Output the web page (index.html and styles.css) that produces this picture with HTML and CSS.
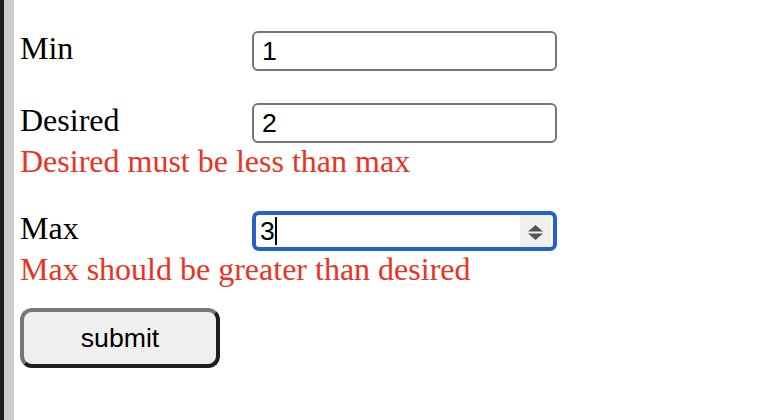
FILE: index.html
```html
<!DOCTYPE html>
<html lang="en">
<head>
<meta charset="utf-8">
<title>Scaling form</title>
<link rel="stylesheet" href="styles.css">
</head>
<body>
<div class="rail-dark"></div>
<div class="rail-grey"></div>
<main class="content">
  <form class="form">
    <div class="group">
      <div class="row">
        <label class="label" for="min">Min</label>
        <input class="input" id="min" type="text" value="1">
      </div>
    </div>
    <div class="group">
      <div class="row">
        <label class="label" for="desired">Desired</label>
        <input class="input" id="desired" type="text" value="2">
      </div>
      <div class="error">Desired must be less than max</div>
    </div>
    <div class="group">
      <div class="row">
        <label class="label">Max</label>
        <div class="input input-focused">
          <span class="value">3</span><span class="caret"></span>
          <span class="spinner">
            <svg width="31" height="33" viewBox="0 0 31 33">
              <polygon points="15.5,10 8,16.5 23,16.5" fill="#555"/>
              <polygon points="8,18.5 23,18.5 15.5,25" fill="#555"/>
            </svg>
          </span>
        </div>
      </div>
      <div class="error">Max should be greater than desired</div>
    </div>
    <div class="actions">
      <button class="button" type="button">submit</button>
    </div>
  </form>
</main>
</body>
</html>
```
FILE: styles.css
```css
html, body {
  height: 100%;
}
body {
  margin: 0;
  display: flex;
  background: #ffffff;
  font-family: "Liberation Serif", "Times New Roman", serif;
  font-size: 32px;
  color: #000;
}
.rail-dark {
  width: 4px;
  background: #1c1c1c;
  flex: none;
}
.rail-grey {
  width: 10px;
  background: #cdcdcd;
  flex: none;
}
.content {
  flex: 1;
  padding: 31px 0 0 6px;
}
.form {
  display: flex;
  flex-direction: column;
}
.group + .group {
  margin-top: 32px;
}
.row {
  display: flex;
  align-items: flex-start;
}
.label {
  width: 232px;
  flex: none;
  line-height: 34px;
}
.input {
  box-sizing: border-box;
  width: 305px;
  height: 40px;
  border: 2px solid #767676;
  border-radius: 6px;
  padding: 0 8px;
  margin: 0;
  font-family: "Liberation Sans", Arial, sans-serif;
  font-size: 26.67px;
  color: #000;
  background: #fff;
  outline: none;
}
.input-focused {
  display: flex;
  align-items: center;
  border: 4px solid #2660c9;
  border-radius: 7px;
  padding: 0 2px 0 4px;
}
.value {
  line-height: 30px;
}
.caret {
  width: 2px;
  height: 28px;
  background: #000;
  margin-left: 0;
}
.spinner {
  margin-left: auto;
  width: 31px;
  height: 32px;
  background: #efefef;
  border-radius: 3px;
  display: flex;
}
.error {
  color: #ea3323;
  line-height: 36px;
}
.actions {
  margin-top: 21px;
}
.button {
  box-sizing: border-box;
  width: 200px;
  height: 60px;
  background: #efefef;
  border-style: solid;
  border-width: 4px;
  border-color: #767676 #1e1e1e #1e1e1e #767676;
  border-radius: 12px;
  font-family: "Liberation Sans", Arial, sans-serif;
  font-size: 26.67px;
  color: #000;
  padding: 0;
  cursor: pointer;
}
```
